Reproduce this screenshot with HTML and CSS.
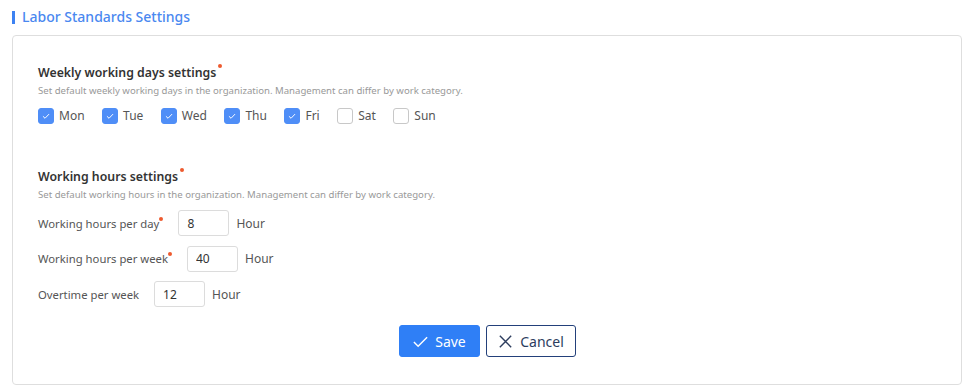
FILE: index.html
```html
<!DOCTYPE html>
<html lang="en">
<head>
  <meta charset="UTF-8" />
  <title>Labor Standards Settings</title>
  <link rel="stylesheet" href="styles.css">
</head>
<body>
  <h2 class="page-title">Labor Standards Settings</h2>

  <div class="card">
    <div class="section">
      <h3 class="section-title">Weekly working days settings<span class="req"></span></h3>
      <p class="section-desc">Set default weekly working days in the organization. Management can differ by work category.</p>
      <div class="days">
        <label class="day"><span class="box checked"><svg viewBox="0 0 16 16"><path d="M4.5 8.3l2.4 2.3 4.6-4.8" /></svg></span>Mon</label>
        <label class="day"><span class="box checked"><svg viewBox="0 0 16 16"><path d="M4.5 8.3l2.4 2.3 4.6-4.8" /></svg></span>Tue</label>
        <label class="day"><span class="box checked"><svg viewBox="0 0 16 16"><path d="M4.5 8.3l2.4 2.3 4.6-4.8" /></svg></span>Wed</label>
        <label class="day"><span class="box checked"><svg viewBox="0 0 16 16"><path d="M4.5 8.3l2.4 2.3 4.6-4.8" /></svg></span>Thu</label>
        <label class="day"><span class="box checked"><svg viewBox="0 0 16 16"><path d="M4.5 8.3l2.4 2.3 4.6-4.8" /></svg></span>Fri</label>
        <label class="day"><span class="box"></span>Sat</label>
        <label class="day"><span class="box"></span>Sun</label>
      </div>
    </div>

    <div class="section hours">
      <h3 class="section-title">Working hours settings<span class="req"></span></h3>
      <p class="section-desc">Set default working hours in the organization. Management can differ by work category.</p>
      <div class="field">
        <span class="field-label">Working hours per day<span class="dot"></span></span>
        <input class="num" type="text" value="8">
        <span class="unit">Hour</span>
      </div>
      <div class="field">
        <span class="field-label">Working hours per week<span class="dot"></span></span>
        <input class="num" type="text" value="40">
        <span class="unit">Hour</span>
      </div>
      <div class="field">
        <span class="field-label">Overtime per week</span>
        <input class="num" type="text" value="12">
        <span class="unit">Hour</span>
      </div>
    </div>

    <div class="actions">
      <button class="btn btn-save">
        <svg viewBox="0 0 18 18"><path d="M2 9.5l4.5 4.5L16 4.5" /></svg>Save
      </button>
      <button class="btn btn-cancel">
        <svg viewBox="0 0 18 18"><path d="M3 3l12 12M15 3L3 15" /></svg>Cancel
      </button>
    </div>
  </div>
</body>
</html>
```

FILE: styles.css
```css
body {
  margin: 0;
  padding: 0 11px 0 12px;
  font-family: "Noto Sans", "Open Sans", sans-serif;
  color: #444;
  background: #fff;
}
.page-title {
  margin: 0;
  padding: 7px 0 0 10px;
  height: 35px;
  box-sizing: border-box;
  position: relative;
  font-size: 14px;
  font-weight: 500;
  color: #4a88f0;
  line-height: 20px;
}
.page-title::before {
  content: "";
  position: absolute;
  left: 0;
  top: 11px;
  width: 3px;
  height: 13px;
  background: #3d82f2;
}
.card {
  border: 1px solid #dedede;
  border-radius: 4px;
  height: 350px;
  box-sizing: border-box;
  padding: 24px 25px 0;
}
.section-title {
  position: relative;
  display: inline-block;
  margin: 0;
  font-size: 12.3px;
  font-weight: 600;
  color: #333;
  line-height: 20px;
}
.req {
  position: absolute;
  right: -6px;
  top: 1px;
  width: 4px;
  height: 4px;
  border-radius: 50%;
  background: #ee5a2f;
}
.section-desc {
  margin: 1px 0 9px;
  font-size: 9.6px;
  color: #999;
  line-height: 14px;
}
.days {
  display: flex;
  align-items: center;
}
.day {
  display: flex;
  align-items: center;
  gap: 5px;
  margin-right: 17.5px;
  font-size: 12px;
  color: #555;
  line-height: 18px;
}
.box {
  width: 14px;
  height: 14px;
  border: 1px solid #c8c8c8;
  border-radius: 3px;
  background: #fff;
}
.box.checked {
  background: #4f8ef7;
  border-color: #4f8ef7;
}
.box svg {
  display: block;
  width: 14px;
  height: 14px;
  fill: none;
  stroke: #fff;
  stroke-width: 1.1;
}
.hours {
  margin-top: 39px;
}
.hours .section-desc {
  margin-bottom: 8px;
}
.field {
  display: flex;
  align-items: center;
  height: 26px;
  margin-bottom: 9.5px;
}
.field-label {
  font-size: 11.3px;
  color: #555;
  margin-right: 15px;
}
.dot {
  display: inline-block;
  width: 4px;
  height: 4px;
  border-radius: 50%;
  background: #ee5a2f;
  vertical-align: top;
  margin-top: 1px;
}
.num {
  width: 51px;
  height: 26px;
  box-sizing: border-box;
  border: 1px solid #dcdcdc;
  border-radius: 3px;
  padding: 0 8px;
  font-family: inherit;
  font-size: 12px;
  color: #333;
}
.unit {
  margin-left: 7px;
  font-size: 12px;
  color: #555;
}
.actions {
  display: flex;
  justify-content: center;
  gap: 6px;
  margin-top: 18px;
}
.btn {
  display: flex;
  align-items: center;
  justify-content: center;
  gap: 6px;
  height: 32px;
  border-radius: 3px;
  font-family: inherit;
  font-size: 14px;
  cursor: pointer;
}
.btn svg {
  width: 17px;
  height: 17px;
  fill: none;
  stroke-width: 1.5;
}
.btn-save {
  width: 81px;
  background: #2f7ff6;
  border: 1px solid #2f7ff6;
  color: #fff;
}
.btn-save svg {
  stroke: #fff;
}
.btn-cancel {
  width: 90px;
  background: #fff;
  border: 1px solid #23407a;
  color: #2d3d5e;
}
.btn-cancel svg {
  stroke: #2d3d5e;
}
```
